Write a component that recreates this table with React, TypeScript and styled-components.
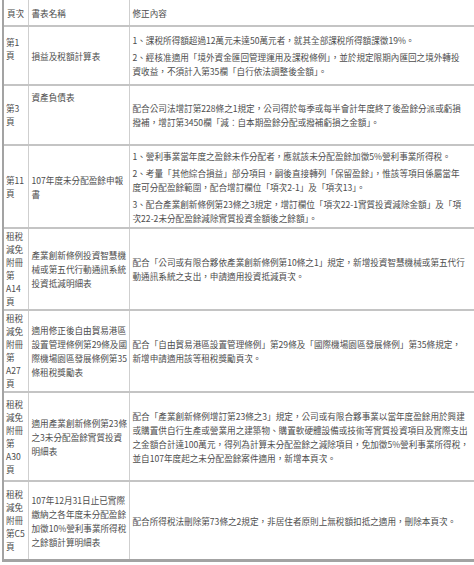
import React from 'react';
import styled, { createGlobalStyle } from 'styled-components';

const GlobalStyle = createGlobalStyle`
  html, body {
    margin: 0;
    padding: 0;
    background: #ffffff;
  }
  body {
    font-family: "Noto Sans CJK TC", "Noto Sans", sans-serif;
    color: #4d4d4d;
  }
`;

type Row = {
  height: number;
  page: string[];
  pageLift?: boolean;
  name: string[];
  nameTop?: boolean;
  content: string[][];
};

const rows: Row[] = [
  {
    height: 59,
    page: ['第1', '頁'],
    pageLift: true,
    name: ['損益及稅額計算表'],
    content: [
      ['1、課稅所得額超過12萬元未達50萬元者，就其全部課稅所得額課徵19%。'],
      [
        '2、經核准適用「境外資金匯回管理運用及課稅條例」，並於規定限期內匯回之境外轉投',
        '資收益，不須計入第35欄「自行依法調整後金額」。',
      ],
    ],
  },
  {
    height: 60,
    page: ['第3', '頁'],
    name: ['資產負債表'],
    nameTop: true,
    content: [
      [
        '配合公司法增訂第228條之1規定，公司得於每季或每半會計年度終了後盈餘分派或虧損',
        '撥補，增訂第3450欄「減：自本期盈餘分配或撥補虧損之金額」。',
      ],
    ],
  },
  {
    height: 83,
    page: ['第11', '頁'],
    name: ['107年度未分配盈餘申報', '書'],
    content: [
      ['1、營利事業當年度之盈餘未作分配者，應就該未分配盈餘加徵5%營利事業所得稅。'],
      [
        '2、考量「其他綜合損益」部分項目，嗣後直接轉列「保留盈餘」，惟該等項目係屬當年',
        '度可分配盈餘範圍，配合增訂欄位「項次2-1」及「項次13」。',
      ],
      [
        '3、配合產業創新條例第23條之3規定，增訂欄位「項次22-1實質投資減除金額」及「項',
        '次22-2未分配盈餘減除實質投資金額後之餘額」。',
      ],
    ],
  },
  {
    height: 82,
    page: ['租稅', '減免', '附冊', '第', 'A14', '頁'],
    name: ['產業創新條例投資智慧機', '械或第五代行動通訊系統', '投資抵減明細表'],
    content: [
      [
        '配合「公司或有限合夥依產業創新條例第10條之1」規定，新增投資智慧機械或第五代行',
        '動通訊系統之支出，申請適用投資抵減頁次。',
      ],
    ],
  },
  {
    height: 82,
    page: ['租稅', '減免', '附冊', '第', 'A27', '頁'],
    name: ['適用修正後自由貿易港區', '設置管理條例第29條及國', '際機場園區發展條例第35', '條租稅獎勵表'],
    content: [
      [
        '配合「自由貿易港區設置管理條例」第29條及「國際機場園區發展條例」第35條規定，',
        '新增申請適用該等租稅獎勵頁次。',
      ],
    ],
  },
  {
    height: 89,
    page: ['租稅', '減免', '附冊', '第', 'A30', '頁'],
    name: ['適用產業創新條例第23條', '之3未分配盈餘實質投資', '明細表'],
    content: [
      [
        '配合「產業創新條例增訂第23條之3」規定，公司或有限合夥事業以當年度盈餘用於興建',
        '或購置供自行生產或營業用之建築物、購置軟硬體設備或技術等實質投資項目及實際支出',
        '之金額合計達100萬元，得列為計算未分配盈餘之減除項目，免加徵5%營利事業所得稅，',
        '並自107年度起之未分配盈餘案件適用，新增本頁次。',
      ],
    ],
  },
  {
    height: 78,
    page: ['租稅', '減免', '附冊', '第C5', '頁'],
    name: ['107年12月31日止已實際', '繳納之各年度未分配盈餘', '加徵10%營利事業所得稅', '之餘額計算明細表'],
    content: [['配合所得稅法刪除第73條之2規定，非居住者原則上無稅額扣抵之適用，刪除本頁次。']],
  },
];

const Frame = styled.div`
  width: 470px;
  margin-left: 2px;
  border-left: 2px solid #a3a3a3;
  border-right: 2px solid #a3a3a3;
  border-bottom: 3px solid #a3a3a3;
`;

const Table = styled.table`
  width: 100%;
  border-collapse: collapse;
  table-layout: fixed;
  font-size: 8.6px;
  line-height: 14px;
  color: #4d4d4d;
`;

const HeadRow = styled.tr`
  height: 26px;
`;

const BodyRow = styled.tr<{ $h: number }>`
  height: ${(p) => p.$h}px;
`;

const HeadCell = styled.th`
  font-weight: normal;
  text-align: left;
  vertical-align: middle;
  padding: 0 3px;
  border-left: 1px solid #cfcfcf;
  border-bottom: 2px solid #c4c4c4;
  &:first-child {
    border-left: none;
  }
`;

const Cell = styled.td<{ $top?: boolean }>`
  vertical-align: ${(p) => (p.$top ? 'top' : 'middle')};
  padding: ${(p) => (p.$top ? '4px 3px 0' : '0 3px')};
  border-left: 1px solid #cfcfcf;
  border-top: 2px solid #c4c4c4;
  white-space: nowrap;
  &:first-child {
    border-left: none;
  }
`;

const PageCell = styled(Cell)<{ $lift?: boolean }>`
  line-height: 13px;
  padding-left: 2px;
  padding-right: 0;
  padding-bottom: ${(p) => (p.$lift ? '14px' : '0')};
`;

const ContentCell = styled(Cell)`
  padding-left: 3px;
  padding-right: 1px;
`;

const Para = styled.p`
  margin: 0;
  & + & {
    margin-top: 3px;
  }
`;

export default function App() {
  return (
    <>
      <GlobalStyle />
      <Frame>
        <Table>
          <colgroup>
            <col style={{ width: 24 }} />
            <col style={{ width: 101 }} />
            <col />
          </colgroup>
          <thead>
            <HeadRow>
              <HeadCell>頁次</HeadCell>
              <HeadCell>書表名稱</HeadCell>
              <HeadCell>修正內容</HeadCell>
            </HeadRow>
          </thead>
          <tbody>
            {rows.map((row, i) => (
              <BodyRow key={i} $h={row.height}>
                <PageCell $lift={row.pageLift}>
                  {row.page.map((line, j) => (
                    <div key={j}>{line}</div>
                  ))}
                </PageCell>
                <Cell $top={row.nameTop}>
                  {row.name.map((line, j) => (
                    <div key={j}>{line}</div>
                  ))}
                </Cell>
                <ContentCell>
                  {row.content.map((para, j) => (
                    <Para key={j}>
                      {para.map((line, k) => (
                        <div key={k}>{line}</div>
                      ))}
                    </Para>
                  ))}
                </ContentCell>
              </BodyRow>
            ))}
          </tbody>
        </Table>
      </Frame>
    </>
  );
}
